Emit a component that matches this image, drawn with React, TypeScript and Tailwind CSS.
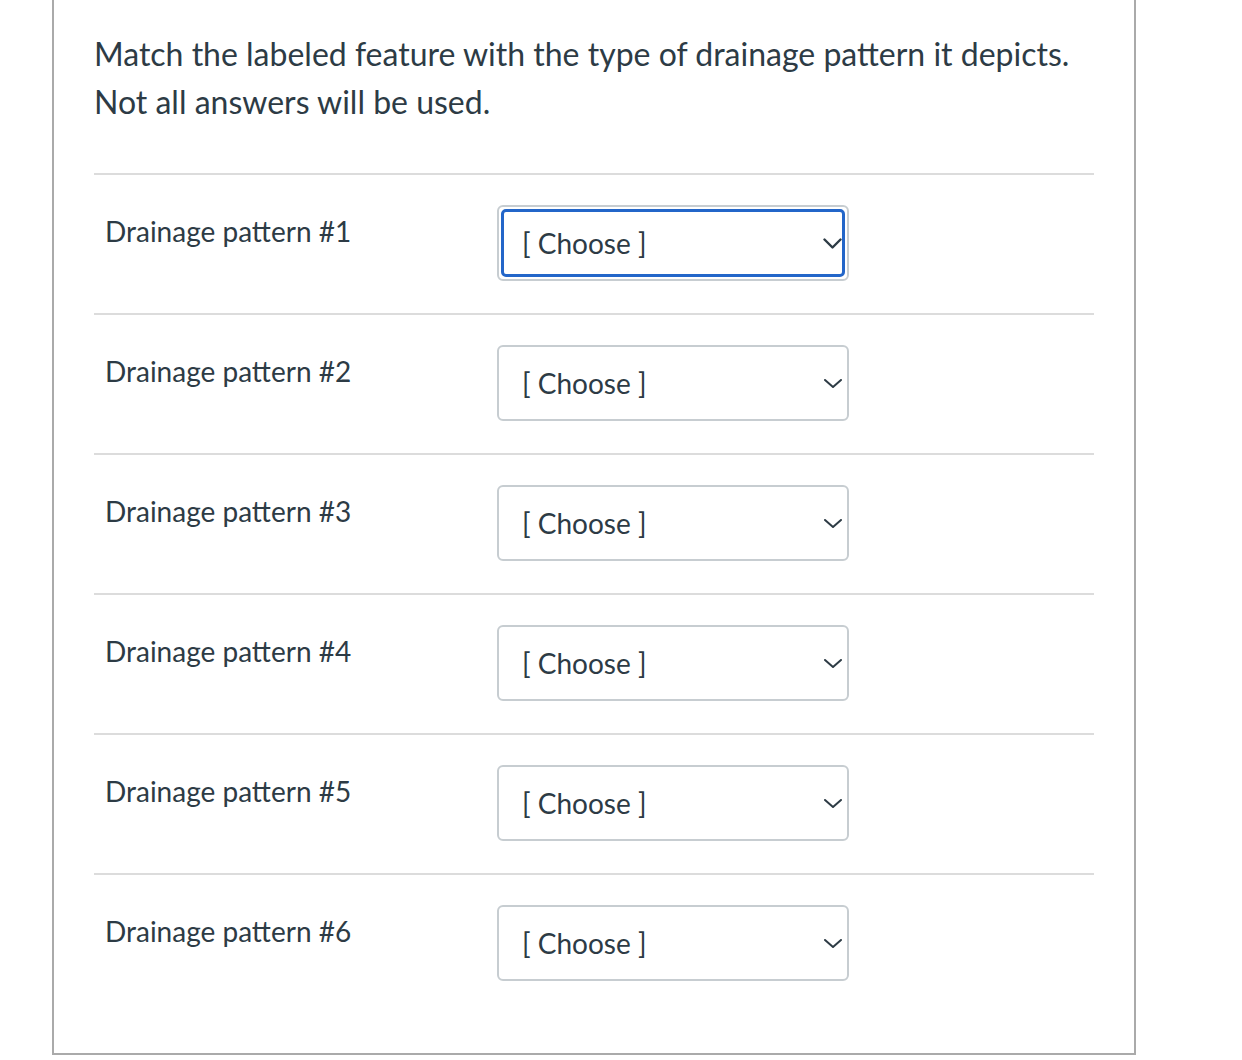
const rows = [1, 2, 3, 4, 5, 6]

function Chevron({ bold }: { bold?: boolean }) {
  return (
    <svg
      width={bold ? 19 : 18}
      height={bold ? 11 : 9}
      viewBox={bold ? '0 0 19 11' : '0 0 18 9'}
      fill="none"
      stroke="#2d3b45"
      strokeWidth={bold ? 2.4 : 2}
      strokeLinecap="round"
      strokeLinejoin="round"
    >
      {bold ? <polyline points="1.5,1.5 9.5,9.5 17.5,1.5" /> : <polyline points="1,1 9,8 17,1" />}
    </svg>
  )
}

function ChooseSelect({ focused }: { focused?: boolean }) {
  return (
    <div className="relative w-[352px] h-[76px] rounded-[6px] border-2 border-[#c7cdd1] bg-white">
      {focused && (
        <div className="absolute inset-[2px] rounded-[5px] border-[3px] border-[#2366c9]" />
      )}
      <div className="relative flex h-full items-center justify-between pl-[23px] pr-[5px]">
        <span className="text-[28px] leading-none text-[#2d3b45]">[ Choose ]</span>
        <Chevron bold={focused} />
      </div>
    </div>
  )
}

export default function App() {
  return (
    <div className="min-h-[1060px] bg-white font-['Lato','Noto_Sans',sans-serif]">
      <div className="ml-[52px] w-[1084px] h-[1055px] border-l-2 border-r-2 border-b-2 border-[#aaaaaa] pl-[40px] pt-[30px]">
        <p className="w-[1040px] text-[32px] leading-[48px] text-[#2d3b45]">
          Match the labeled feature with the type of drainage pattern it depicts.
          <br />
          Not all answers will be used.
        </p>
        <div className="mt-[47px] w-[1000px]">
          {rows.map((n) => (
            <div
              key={n}
              className="flex items-start border-t-2 border-[#dcdcdc] pl-[11px] pt-[30px] pb-[32px]"
            >
              <div className="w-[392px] pt-[10px] text-[28px] leading-[32px] text-[#2d3b45]">
                Drainage pattern #{n}
              </div>
              <ChooseSelect focused={n === 1} />
            </div>
          ))}
        </div>
      </div>
    </div>
  )
}
